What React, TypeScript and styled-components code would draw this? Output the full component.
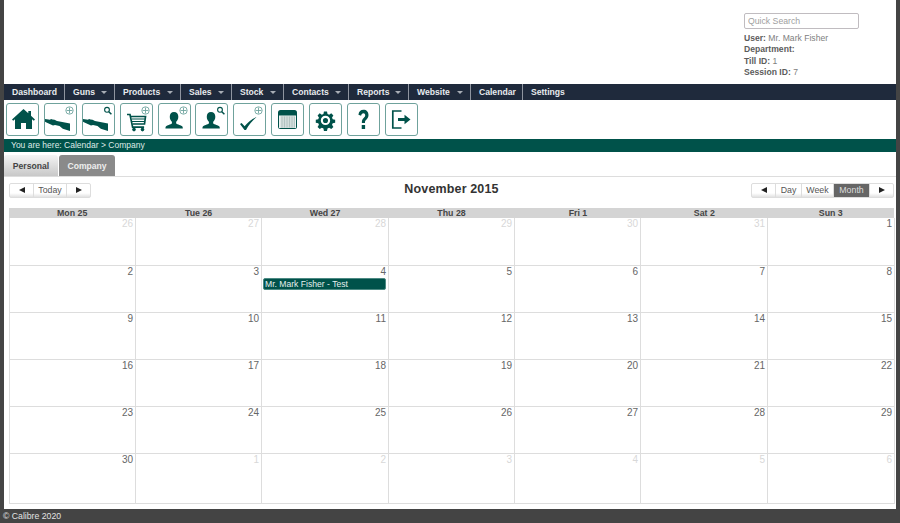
import React from "react";
import styled, { createGlobalStyle } from "styled-components";

const GREEN = "#00524a";

const Global = createGlobalStyle`
  html, body { margin: 0; padding: 0; background: #444; }
  body { font-family: "Liberation Sans", Arial, sans-serif; overflow: hidden; }
`;

const Page = styled.div`
  width: 900px;
  height: 523px;
  display: flex;
  flex-direction: column;
  background: #444;
  overflow: hidden;
`;
const Shell = styled.main`
  height: 509px;
  margin: 0 4px;
  background: #fff;
  display: flex;
  flex-direction: column;
  box-sizing: border-box;
`;
const Footer = styled.footer`
  height: 14px;
  line-height: 15px;
  padding-left: 3px;
  font-size: 8.7px;
  color: #e2e2e2;
`;
const Header = styled.header`
  height: 84px;
  box-sizing: border-box;
  padding: 13px 0 0 740px;
`;
const Search = styled.input`
  display: block;
  box-sizing: border-box;
  width: 115px;
  height: 16px;
  border: 1px solid #c0bcc0;
  border-radius: 2px;
  padding: 0 3px;
  font: 8.7px "Liberation Sans", Arial, sans-serif;
  color: #888;
  margin-bottom: 4px;
  &::placeholder { color: #a0a0a0; opacity: 1; }
`;
const InfoLine = styled.div`
  font-size: 8.6px;
  line-height: 11.4px;
  color: #808080;
  white-space: nowrap;
  b { color: #5c5c5c; }
`;
const Nav = styled.nav`
  height: 16px;
  background: #1f2a3c;
  display: flex;
`;
const NavItem = styled.div<{ $w: number }>`
  width: ${(p) => p.$w}px;
  box-sizing: border-box;
  display: flex;
  align-items: center;
  padding: 0 7px 0 8px;
  border-right: 1px solid #8f95a0;
  font-size: 8.6px;
  font-weight: 700;
  color: #e8ebee;
  white-space: nowrap;
  &:last-child { border-right: 0; }
`;
const Caret = styled.span`
  margin-left: auto;
  width: 0;
  height: 0;
  border-left: 3px solid transparent;
  border-right: 3px solid transparent;
  border-top: 3px solid #a8adb5;
`;
const Toolbar = styled.div`
  height: 39px;
  box-sizing: border-box;
  padding: 3px 0 0 2px;
  display: flex;
  gap: 4.9px;
`;
const ToolButton = styled.a`
  width: 33px;
  height: 33px;
  box-sizing: border-box;
  border: 1px solid #6fa29c;
  border-radius: 3px;
  display: block;
  background: #fff;
  svg { display: block; width: 31px; height: 31px; }
`;
const Crumb = styled.div`
  height: 13px;
  line-height: 13px;
  background: ${GREEN};
  color: #dfeae8;
  font-size: 8.5px;
  padding-left: 7px;
`;
const Tabs = styled.div`
  height: 25px;
  box-sizing: border-box;
  padding-top: 3px;
  display: flex;
  gap: 1px;
  border-bottom: 1px solid #ddd;
`;
const Tab = styled.div<{ $active?: boolean }>`
  width: ${(p) => (p.$active ? "56px" : "54px")};
  box-sizing: border-box;
  border-radius: 3px 3px 0 0;
  text-align: center;
  line-height: 23px;
  font-size: 8.6px;
  font-weight: 700;
  color: ${(p) => (p.$active ? "#eee" : "#444")};
  background: ${(p) => (p.$active ? "#8a8a8a" : "linear-gradient(#f4f4f4, #c8c8c8)")};
`;
const CalHead = styled.div`
  margin: 5px 2px 0 5px;
  height: 16px;
  display: grid;
  grid-template-columns: 1fr auto 1fr;
  align-items: center;
`;
const Title = styled.h2`
  margin: 0 0 2px;
  font-size: 12.5px;
  font-weight: 700;
  color: #333;
  letter-spacing: 0.15px;
`;
const Group = styled.div<{ $right?: boolean }>`
  display: flex;
  justify-content: ${(p) => (p.$right ? "flex-end" : "flex-start")};
`;
const SegButton = styled.div<{ $w: number; $on?: boolean }>`
  width: ${(p) => p.$w}px;
  height: 15px;
  box-sizing: border-box;
  border: 1px solid #ddd;
  margin-left: -1px;
  &:first-child { margin-left: 0; border-radius: 2px 0 0 2px; }
  &:last-child { border-radius: 0 2px 2px 0; }
  display: flex;
  align-items: center;
  justify-content: center;
  font-size: 8.8px;
  color: ${(p) => (p.$on ? "#ddd" : "#555")};
  background: ${(p) => (p.$on ? "#666" : "linear-gradient(#fff 70%, #e2e2e2)")};
`;
const ArrowL = styled.span`
  border-top: 3.5px solid transparent;
  border-bottom: 3.5px solid transparent;
  border-right: 6px solid #222;
`;
const ArrowR = styled.span`
  border-top: 3.5px solid transparent;
  border-bottom: 3.5px solid transparent;
  border-left: 6px solid #222;
`;
const DayHead = styled.div`
  margin: 10px 2px 0 5px;
  display: grid;
  grid-template-columns: repeat(7, 1fr);
  height: 10px;
  background: #d4d4d4;
`;
const DayName = styled.div`
  font-size: 8.8px;
  line-height: 10px;
  font-weight: 700;
  text-align: center;
  color: #444;
`;
const Grid = styled.div`
  margin: 0 1px 0 5px;
  display: grid;
  grid-template-columns: 126px 126px 127px 126px 126px 127px 127px;
  grid-template-rows: 48px repeat(4, 47px) 50px;
  border-left: 1px solid #ddd;
`;
const Cell = styled.div`
  border-right: 1px solid #ddd;
  border-bottom: 1px solid #ddd;
  padding: 0 2px 0 1px;
  position: relative;
  min-width: 0;
`;
const Num = styled.div<{ $muted?: boolean }>`
  text-align: right;
  font-size: 10px;
  line-height: 11px;
  color: ${(p) => (p.$muted ? "#d8d8d8" : "#666")};
`;
const Event = styled.div`
  margin-top: 1px;
  height: 12px;
  box-sizing: border-box;
  border: 1px solid #4c8a83;
  border-radius: 2px;
  background: ${GREEN};
  color: #e6efee;
  font-size: 8.6px;
  line-height: 10px;
  padding-left: 1px;
  white-space: nowrap;
`;

const Plus = () => (
  <g fill="none" stroke="#6fa59f" strokeWidth="0.9">
    <circle cx="24.500" cy="6.500" r="3.700" />
    <path d="M24.500 3.500v6M21.500 6.500h6" />
  </g>
);
const Lens = () => (
  <g fill="none" stroke={GREEN} strokeWidth="1.100">
    <circle cx="24" cy="5.800" r="2.400" />
    <path d="M25.800 7.700l2.600 2.600" strokeWidth="1.500" />
  </g>
);
const Rifle = () => (
  <path
    fill={GREEN}
    d="M0 15l5 .7 1-.7 1.500.6 2 .1 2.500 1.300L25 19.500V27l-7.200-2.300-3.300-2.700-4.500-1-2 .4L1.500 18.600 0 17.800z"
  />
);
const Person = () => (
  <path
    transform="translate(1.500 -0.500) scale(0.9)"
    fill={GREEN}
    d="M15 9.500c3 0 4.800 2.200 4.800 5.200 0 2.600-1.200 4.600-2.400 5.600v1.600c0 1 4.600 1.800 6.400 3.200.8.700 1 1.700 1 2.700H5.500c0-1 .2-2 1-2.700 1.800-1.400 6.200-2.200 6.200-3.200v-1.600c-1.200-1-2.400-3-2.400-5.600 0-3 1.700-5.200 4.700-5.200z"
  />
);

const icons: React.ReactNode[] = [
  <path key="h" fill={GREEN} d="M16.500 5L5 15.500l1.200 1.300L8 15.300V25h6v-6h5v6h6v-9.700l1.800 1.500 1.200-1.300-4-3.700V7h-2.700v2.300z" />,
  <g key="r1"><Plus /><Rifle /></g>,
  <g key="r2"><Lens /><Rifle /></g>,
  <g key="c">
    <Plus />
    <g fill="none" stroke={GREEN} strokeWidth="1.700">
      <path d="M6 10.500h3l2.600 12.700h11.500" />
      <path d="M10 12.500h14.500l-1 7.500H11.500" />
      <path d="M10.800 15h13M11 17.500h12.500" strokeWidth="1.100" />
    </g>
    <circle cx="13" cy="25.600" r="1.800" fill={GREEN} />
    <circle cx="21.500" cy="25.600" r="1.800" fill={GREEN} />
  </g>,
  <g key="p1"><Plus /><Person /></g>,
  <g key="p2"><Lens /><Person /></g>,
  <g key="t">
    <Plus />
    <path fill={GREEN} d="M6 20l1.600-1.100 3 3.400C13.500 18.500 17.500 15 22.500 13c-4 3.500-8 8-10.500 13h-1.500z" />
  </g>,
  <g key="cal">
    <rect x="6" y="6" width="19" height="19" rx="2.500" fill={GREEN} />
    <rect x="7" y="11.500" width="17" height="12.500" fill="#eef3f2" />
    <path
      d="M8.500 13h14M8.500 15h14M8.500 17h14M8.500 19h14M8.500 21h14M8.500 23h14M10 12.500v11M12.500 12.500v11M15 12.500v11M17.500 12.500v11M20 12.500v11M22.500 12.500v11"
      stroke="#a9bdba"
      strokeWidth="0.800"
    />
  </g>,
  <path
    key="g"
    transform="translate(2.300 2.400) scale(0.85)"
    fill={GREEN}
    fillRule="evenodd"
    d="M13.700 6h3.600l.6 2.900 1.900.8 2.500-1.600 2.500 2.500-1.600 2.500.8 1.900 2.900.6v3.600l-2.900.6-.8 1.900 1.600 2.500-2.500 2.500-2.500-1.600-1.900.8-.6 2.900h-3.600l-.6-2.900-1.900-.8-2.500 1.600-2.500-2.500 1.600-2.500-.8-1.900-2.900-.6v-3.600l2.900-.6.8-1.900-1.600-2.500 2.500-2.500 2.500 1.600 1.900-.8zM15.500 11a5.500 5.500 0 1 0 0 11 5.500 5.500 0 0 0 0-11zm0 2.500a3 3 0 1 1 0 6 3 3 0 0 1 0-6z"
  />,
  <path
    key="q"
    transform="translate(4.300 1.700) scale(0.72 0.9)"
    fill={GREEN}
    d="M15.500 4.500c4.200 0 7 2.300 7 5.900 0 2.600-1.500 4-3 5.100-1.300 1-1.900 1.600-1.900 3v.7h-4.300v-1c0-2.300 1-3.500 2.500-4.600 1.300-1 2.100-1.700 2.100-3 0-1.400-1-2.200-2.500-2.200-1.700 0-2.800 1-3.200 2.700L8.500 10c.6-3.500 3.200-5.500 7-5.500zM13.100 21.500h4.700V26h-4.700z"
  />,
  <g key="o">
    <path d="M15.500 7H6.800v17h8.700" fill="none" stroke={GREEN} strokeWidth="1.700" />
    <path fill={GREEN} d="M12 14h6.500v-3.200l6 4.700-6 4.700V17H12z" />
  </g>,
];

const menu: [string, number, boolean][] = [
  ["Dashboard", 61, false],
  ["Guns", 50, true],
  ["Products", 66, true],
  ["Sales", 51, true],
  ["Stock", 52, true],
  ["Contacts", 65, true],
  ["Reports", 60, true],
  ["Website", 62, true],
  ["Calendar", 52, false],
  ["Settings", 60, false],
];

const weekdays = ["Mon 25", "Tue 26", "Wed 27", "Thu 28", "Fri 1", "Sat 2", "Sun 3"];
const days: [number, boolean][] = [
  [26, true], [27, true], [28, true], [29, true], [30, true], [31, true], [1, false],
  ...Array.from({ length: 29 }, (_, i) => [i + 2, false] as [number, boolean]),
  [1, true], [2, true], [3, true], [4, true], [5, true], [6, true],
];

export default function App() {
  return (
    <Page>
      <Global />
      <Shell>
        <Header>
          <Search placeholder="Quick Search" />
          <InfoLine><b>User:</b> Mr. Mark Fisher</InfoLine>
          <InfoLine><b>Department:</b></InfoLine>
          <InfoLine><b>Till ID:</b> 1</InfoLine>
          <InfoLine><b>Session ID:</b> 7</InfoLine>
        </Header>
        <Nav>
          {menu.map(([label, w, caret]) => (
            <NavItem key={label} $w={w}>
              {label}
              {caret && <Caret />}
            </NavItem>
          ))}
        </Nav>
        <Toolbar>
          {icons.map((icon, i) => (
            <ToolButton key={i}>
              <svg viewBox="0 0 31 31">{icon}</svg>
            </ToolButton>
          ))}
        </Toolbar>
        <Crumb>You are here: Calendar &gt; Company</Crumb>
        <Tabs>
          <Tab>Personal</Tab>
          <Tab $active>Company</Tab>
        </Tabs>
        <CalHead>
          <Group>
            <SegButton $w={25}><ArrowL /></SegButton>
            <SegButton $w={34}>Today</SegButton>
            <SegButton $w={25}><ArrowR /></SegButton>
          </Group>
          <Title>November 2015</Title>
          <Group $right>
            <SegButton $w={25}><ArrowL /></SegButton>
            <SegButton $w={27}>Day</SegButton>
            <SegButton $w={33}>Week</SegButton>
            <SegButton $w={37} $on>Month</SegButton>
            <SegButton $w={25}><ArrowR /></SegButton>
          </Group>
        </CalHead>
        <DayHead>
          {weekdays.map((d) => <DayName key={d}>{d}</DayName>)}
        </DayHead>
        <Grid>
          {days.map(([n, muted], i) => (
            <Cell key={i}>
              <Num $muted={muted}>{n}</Num>
              {i === 9 && <Event>Mr. Mark Fisher - Test</Event>}
            </Cell>
          ))}
        </Grid>
      </Shell>
      <Footer>© Calibre 2020</Footer>
    </Page>
  );
}
